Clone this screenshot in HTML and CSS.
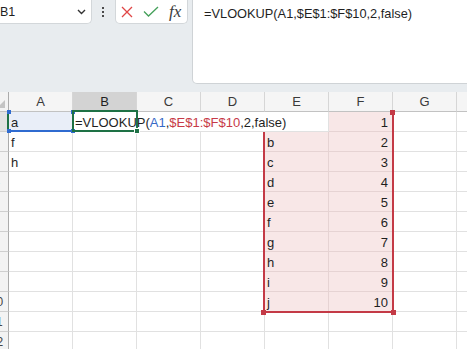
FILE: index.html
```html
<!DOCTYPE html>
<html lang="en">
<head>
    <meta charset="UTF-8">
    <meta name="viewport" content="width=device-width, initial-scale=1.0">
    <title>VLOOKUP</title>
    <link rel="stylesheet" href="styles.css">
</head>
<body>

    <div class="top">
        <div class="namebox">
            <span>B1</span>
            <svg width="9" height="6" viewBox="0 0 9 6"><path d="M1 1L4.5 4.5L8 1" fill="none" stroke="#333" stroke-width="1.4"/></svg>
        </div>
        <div class="grip"><i></i><i></i><i></i></div>
        <div class="fbtns">
            <svg width="12" height="12" viewBox="0 0 12 12"><path d="M1 1L11 11M11 1L1 11" stroke="#e04646" stroke-width="1.3"/></svg>
            <svg width="16" height="11" viewBox="0 0 16 11"><path d="M1 5.5L5.5 10L15 1" fill="none" stroke="#45a05a" stroke-width="1.3"/></svg>
            <span class="fx">fx</span>
        </div>
        <div class="fbar">=VLOOKUP(A1,$E$1:$F$10,2,false)</div>
    </div>

    <div class="sheet">
        <div class="grid">
            <div class="corner"></div>
            <div class="ch">A</div><div class="ch sel">B</div><div class="ch">C</div><div class="ch">D</div>
            <div class="ch">E</div><div class="ch">F</div><div class="ch">G</div><div class="ch">H</div>

            <div class="rh act">1</div><div class="c ref">a</div>
            <div class="c over">=VLOOKUP(<span class="blue">A1</span>,<span class="red">$E$1:$F$10</span>,2,false)</div>
            <div class="c pk num">1</div><div class="c"></div><div class="c"></div>

            <div class="rh">2</div><div class="c">f</div><div class="c"></div><div class="c"></div><div class="c"></div>
            <div class="c pk">b</div><div class="c pk num">2</div><div class="c"></div><div class="c"></div>

            <div class="rh">3</div><div class="c">h</div><div class="c"></div><div class="c"></div><div class="c"></div>
            <div class="c pk">c</div><div class="c pk num">3</div><div class="c"></div><div class="c"></div>

            <div class="rh">4</div><div class="c"></div><div class="c"></div><div class="c"></div><div class="c"></div>
            <div class="c pk">d</div><div class="c pk num">4</div><div class="c"></div><div class="c"></div>

            <div class="rh">5</div><div class="c"></div><div class="c"></div><div class="c"></div><div class="c"></div>
            <div class="c pk">e</div><div class="c pk num">5</div><div class="c"></div><div class="c"></div>

            <div class="rh">6</div><div class="c"></div><div class="c"></div><div class="c"></div><div class="c"></div>
            <div class="c pk">f</div><div class="c pk num">6</div><div class="c"></div><div class="c"></div>

            <div class="rh">7</div><div class="c"></div><div class="c"></div><div class="c"></div><div class="c"></div>
            <div class="c pk">g</div><div class="c pk num">7</div><div class="c"></div><div class="c"></div>

            <div class="rh">8</div><div class="c"></div><div class="c"></div><div class="c"></div><div class="c"></div>
            <div class="c pk">h</div><div class="c pk num">8</div><div class="c"></div><div class="c"></div>

            <div class="rh">9</div><div class="c"></div><div class="c"></div><div class="c"></div><div class="c"></div>
            <div class="c pk">i</div><div class="c pk num">9</div><div class="c"></div><div class="c"></div>

            <div class="rh">10</div><div class="c"></div><div class="c"></div><div class="c"></div><div class="c"></div>
            <div class="c pk">j</div><div class="c pk num">10</div><div class="c"></div><div class="c"></div>

            <div class="rh">11</div><div class="c"></div><div class="c"></div><div class="c"></div><div class="c"></div>
            <div class="c"></div><div class="c"></div><div class="c"></div><div class="c"></div>

            <div class="rh">12</div><div class="c"></div><div class="c"></div><div class="c"></div><div class="c"></div>
            <div class="c"></div><div class="c"></div><div class="c"></div><div class="c"></div>
        </div>

        <!-- range highlights drawn over the grid -->
        <div class="marks">
            <div class="mark-a"><i class="tl"></i><i class="tr"></i><i class="bl"></i><i class="br"></i></div>
            <div class="mark-act"><i></i></div>
            <div class="mark-r"><i class="tr"></i><i class="bl"></i><i class="br"></i></div>
        </div>
    </div>

</body>
</html>
```

FILE: styles.css
```css
body {
    margin: 0;
    width: 467px;
    height: 349px;
    overflow: hidden;
    background: #fff;
    font-family: "Liberation Sans", Arial, sans-serif;
    color: #1f1f1f;
}
.top {
    display: flex;
    align-items: flex-start;
    height: 92px;
    background: #e8ecef;
}
.namebox {
    display: flex;
    align-items: center;
    justify-content: space-between;
    box-sizing: border-box;
    width: 104px;
    height: 24px;
    margin-left: -12px;
    padding: 0 5px 0 11px;
    background: #fff;
    border: 1px solid #d3d7da;
    border-top: none;
    border-radius: 0 0 5px 5px;
    font-size: 12.5px;
}
.grip {
    display: flex;
    flex-direction: column;
    align-items: center;
    gap: 2px;
    width: 22px;
    padding-top: 7px;
}
.grip i {
    width: 2px;
    height: 2px;
    background: #4a4a4a;
}
.fbtns {
    display: flex;
    align-items: center;
    box-sizing: border-box;
    width: 73px;
    height: 24px;
    margin-left: 1px;
    padding-left: 5px;
    background: #fff;
    border: 1px solid #d3d7da;
    border-top: none;
    border-radius: 0 0 5px 5px;
}
.fbtns svg + svg {
    margin-left: 10px;
}
.fx {
    margin-left: 10px;
    font-family: "Liberation Serif", serif;
    font-style: italic;
    font-size: 17px;
    color: #3c3c3c;
}
.fbar {
    flex: 1;
    box-sizing: border-box;
    height: 84px;
    margin-left: 4px;
    margin-right: -10px;
    padding: 6px 11px;
    background: #fff;
    border: 1px solid #cfd3d6;
    border-top: none;
    border-radius: 0 0 5px 5px;
    font-size: 12.8px;
    line-height: 16px;
}
.sheet {
    position: relative;
    margin-left: -15px;
}
.grid,
.marks {
    display: grid;
    grid-template-columns: 24px repeat(8, 64px);
    grid-template-rows: repeat(13, 20px);
}
.marks {
    position: absolute;
    inset: 0;
}
.corner {
    position: relative;
    background: #f3f3f3;
    border-right: 1px solid #ababab;
    border-bottom: 1px solid #c2c2c2;
}
.corner::after {
    content: "";
    position: absolute;
    right: 3px;
    bottom: 3px;
    border-left: 8px solid transparent;
    border-bottom: 8px solid #c4c4c4;
}
.ch {
    background: #f5f5f5;
    border-right: 1px solid #d6d6d6;
    border-bottom: 1px solid #c2c2c2;
    text-align: center;
    font-size: 13px;
    line-height: 19px;
    color: #3a3a3a;
}
.ch.sel {
    background: #d3d3d3;
    color: #1f1f1f;
}
.rh {
    background: #f3f3f3;
    border-right: 1px solid #ababab;
    border-bottom: 1px solid #cfcfcf;
    text-align: center;
    font-size: 12px;
    line-height: 21px;
    color: #444;
}
.rh.act {
    background: #e2e2e2;
    border-right-color: #1e7145;
    box-shadow: inset -1px 0 #1e7145;
}
.c {
    box-sizing: border-box;
    padding: 0 2px;
    border-right: 1px solid #e1e1e1;
    border-bottom: 1px solid #e1e1e1;
    font-size: 13px;
    line-height: 21px;
    white-space: nowrap;
}
.c.ref {
    background: #e9eef8;
}
.c.over {
    grid-column: span 4;
    background: #fff;
}
.c.pk {
    background: #f8e7e7;
    border-color: #e6d3d3;
}
.c.num {
    padding-right: 4px;
    text-align: right;
}
.blue {
    color: #3569c6;
}
.red {
    color: #c73a48;
}
.mark-a {
    position: relative;
    grid-column: 2;
    grid-row: 2;
    margin: -1px 0 0 -1px;
    border-bottom: 2px solid #2f6bd0;
}
.mark-a i {
    position: absolute;
    width: 4px;
    height: 4px;
    background: #2f6bd0;
}
.mark-a .tl { left: -1px; top: -1px; }
.mark-a .tr { right: -2px; top: -1px; }
.mark-a .bl { left: -1px; bottom: -3px; }
.mark-a .br { right: -2px; bottom: -3px; }
.mark-act {
    position: relative;
    grid-column: 3;
    grid-row: 2;
    margin: -2px -1px 0 -1px;
    border: 2px solid #1e7145;
}
.mark-act i {
    position: absolute;
    right: -4px;
    bottom: -4px;
    width: 4px;
    height: 4px;
    background: #1e7145;
    border: 1px solid #fff;
}
.mark-r {
    position: relative;
    grid-column: 6 / 8;
    grid-row: 2 / 12;
    margin: 0 -1px -1px -2px;
    border-right: 2px solid #c43a46;
    border-bottom: 2px solid #c43a46;
}
.mark-r::before {
    content: "";
    position: absolute;
    left: 0;
    top: 20px;
    bottom: 0;
    width: 2px;
    background: #c43a46;
}
.mark-r i {
    position: absolute;
    width: 5px;
    height: 5px;
    background: #c43a46;
}
.mark-r .tr { right: -3px; top: -2px; }
.mark-r .bl { left: -2px; bottom: -4px; }
.mark-r .br { right: -4px; bottom: -4px; }
```
